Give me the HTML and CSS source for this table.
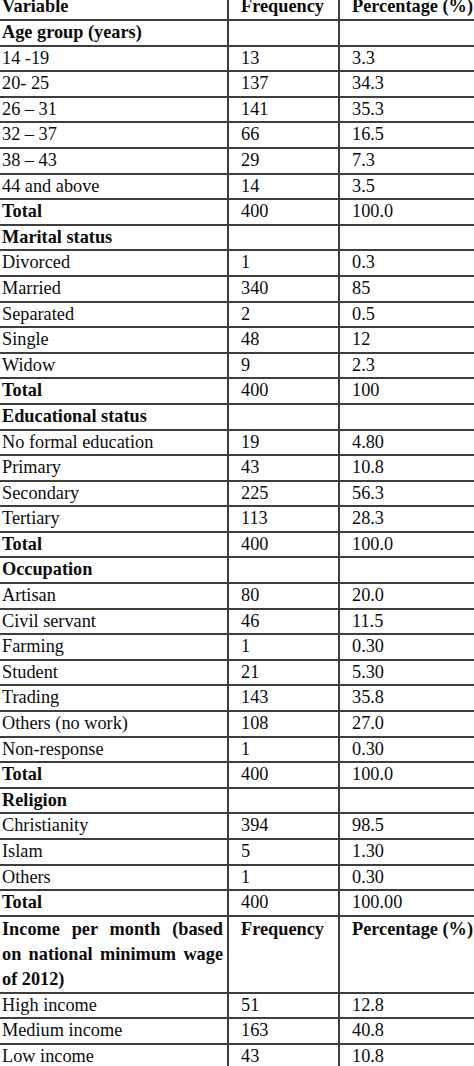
FILE: index.html
```html
<!DOCTYPE html>
<html>
<head>
<meta charset="utf-8">
<link rel="stylesheet" href="styles.css">
</head>
<body>
<table class="data">
  <colgroup><col class="c1"><col class="c2"><col class="c3"></colgroup>
  <tr class="b"><td>Variable</td><td>Frequency</td><td>Percentage (%)</td></tr>
  <tr class="b"><td>Age group (years)</td><td></td><td></td></tr>
  <tr><td>14 -19</td><td>13</td><td>3.3</td></tr>
  <tr><td>20- 25</td><td>137</td><td>34.3</td></tr>
  <tr><td>26 – 31</td><td>141</td><td>35.3</td></tr>
  <tr><td>32 – 37</td><td>66</td><td>16.5</td></tr>
  <tr><td>38 – 43</td><td>29</td><td>7.3</td></tr>
  <tr><td>44 and above</td><td>14</td><td>3.5</td></tr>
  <tr><td class="bt">Total</td><td>400</td><td>100.0</td></tr>
  <tr class="b"><td>Marital status</td><td></td><td></td></tr>
  <tr><td>Divorced</td><td>1</td><td>0.3</td></tr>
  <tr><td>Married</td><td>340</td><td>85</td></tr>
  <tr><td>Separated</td><td>2</td><td>0.5</td></tr>
  <tr><td>Single</td><td>48</td><td>12</td></tr>
  <tr><td>Widow</td><td>9</td><td>2.3</td></tr>
  <tr><td class="bt">Total</td><td>400</td><td>100</td></tr>
  <tr class="b"><td>Educational status</td><td></td><td></td></tr>
  <tr><td>No formal education</td><td>19</td><td>4.80</td></tr>
  <tr><td>Primary</td><td>43</td><td>10.8</td></tr>
  <tr><td>Secondary</td><td>225</td><td>56.3</td></tr>
  <tr><td>Tertiary</td><td>113</td><td>28.3</td></tr>
  <tr><td class="bt">Total</td><td>400</td><td>100.0</td></tr>
  <tr class="b"><td>Occupation</td><td></td><td></td></tr>
  <tr><td>Artisan</td><td>80</td><td>20.0</td></tr>
  <tr><td>Civil servant</td><td>46</td><td>11.5</td></tr>
  <tr><td>Farming</td><td>1</td><td>0.30</td></tr>
  <tr><td>Student</td><td>21</td><td>5.30</td></tr>
  <tr><td>Trading</td><td>143</td><td>35.8</td></tr>
  <tr><td>Others (no work)</td><td>108</td><td>27.0</td></tr>
  <tr><td>Non-response</td><td>1</td><td>0.30</td></tr>
  <tr><td class="bt">Total</td><td>400</td><td>100.0</td></tr>
  <tr class="b"><td>Religion</td><td></td><td></td></tr>
  <tr><td>Christianity</td><td>394</td><td>98.5</td></tr>
  <tr><td>Islam</td><td>5</td><td>1.30</td></tr>
  <tr><td>Others</td><td>1</td><td>0.30</td></tr>
  <tr><td class="bt">Total</td><td>400</td><td>100.00</td></tr>
  <tr class="b tall"><td class="just">Income per month (based on national minimum wage of 2012)</td><td class="nw">Frequency</td><td class="nw">Percentage (%)</td></tr>
  <tr><td>High income</td><td>51</td><td>12.8</td></tr>
  <tr><td>Medium income</td><td>163</td><td>40.8</td></tr>
  <tr><td>Low income</td><td>43</td><td>10.8</td></tr>
</table>
</body>
</html>
```

FILE: styles.css
```css
html, body {
  margin: 0;
  padding: 0;
  background: #ffffff;
  overflow: hidden;
}
body {
  width: 474px;
  height: 1066px;
}
.data {
  border-collapse: collapse;
  table-layout: fixed;
  width: 490px;
  margin-top: -6.6px;
  margin-left: -12px;
  font-family: "Liberation Serif", "Times New Roman", serif;
  font-size: 18.3px;
  color: #0c0c0c;
}
.c1 { width: 239px; }
.c2 { width: 111px; }
.c3 { width: 140px; }
.data td {
  border: 2px solid #3e3e3e;
  padding: 0 11px 0 12px;
  height: 23.6px;
  line-height: 23.6px;
  vertical-align: top;
  white-space: nowrap;
  overflow: hidden;
}
.data tr.b td,
.data td.bt {
  font-weight: bold;
}
.data tr.tall td {
  line-height: 25px;
  height: 75px;
  white-space: normal;
}
.data tr.tall td.nw {
  white-space: nowrap;
}
.data td.just {
  text-align: justify;
  padding-right: 4px;
}
```
